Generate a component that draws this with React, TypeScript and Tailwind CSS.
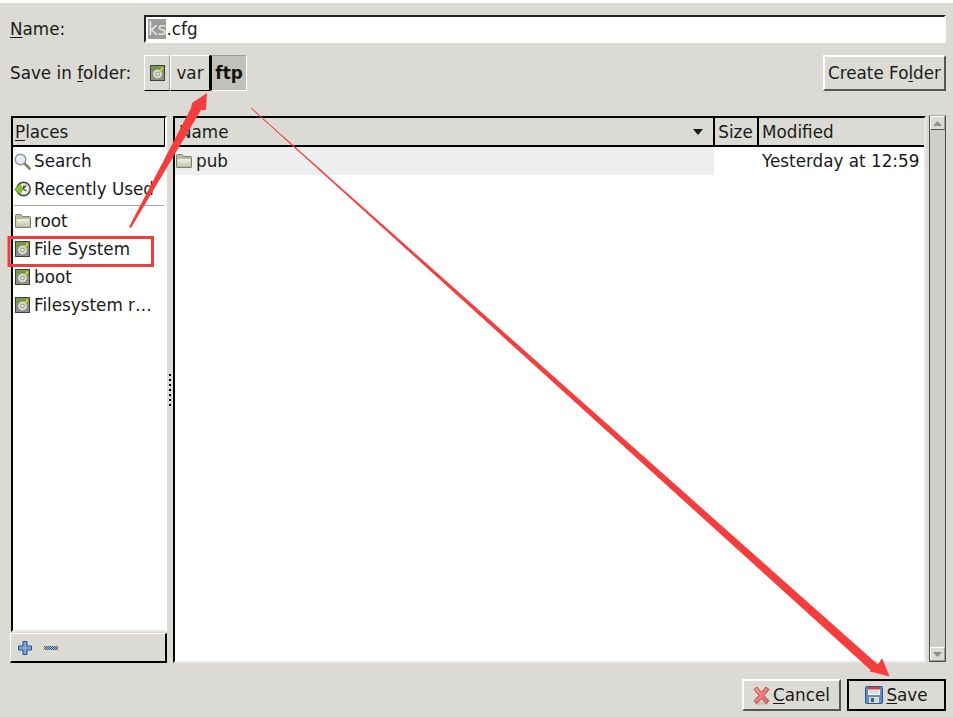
import React from 'react';

const bevelOut = 'border border-t-white border-l-white border-r-[#9d9c9a] border-b-[#9d9c9a]';

function DiskIcon() {
  return (
    <svg width="15" height="16" viewBox="0 0 15 16" className="shrink-0">
      <rect x="0.5" y="0.5" width="14" height="15" fill="#8f918a" stroke="#3c3f3a" />
      <rect x="1.5" y="1.5" width="12" height="5" fill="#6f9e36" />
      <circle cx="7.5" cy="9" r="5" fill="#d9dad3" stroke="#80827a" />
      <path d="M8 8 L12 2 L13.5 3 L9 9 Z" fill="#e8d44c" />
      <circle cx="7.5" cy="9" r="1.8" fill="#f4f4f0" stroke="#8c8e86" />
    </svg>
  );
}

function FolderIcon() {
  return (
    <svg width="16" height="14" viewBox="0 0 16 14" className="shrink-0">
      <defs>
        <linearGradient id="folderFill" x1="0" y1="0" x2="0" y2="1">
          <stop offset="0" stopColor="#eef0dc" />
          <stop offset="1" stopColor="#c3c8a4" />
        </linearGradient>
      </defs>
      <path d="M1 13.5 Q0.5 13.5 0.5 13 V1.5 Q0.5 0.5 1.5 0.5 H6 L7.5 2.5 H14.5 Q15.5 2.5 15.5 3.5 V13 Q15.5 13.5 15 13.5 Z" fill="#b9bda0" stroke="#7d8070" />
      <path d="M1.5 12.5 V5 H14.5 V12.5 Z" fill="url(#folderFill)" />
    </svg>
  );
}

function SearchIcon() {
  return (
    <svg width="17" height="17" viewBox="0 0 17 17" className="shrink-0">
      <path d="M10 10 L15.5 15.5" stroke="#86796a" strokeWidth="2.6" strokeLinecap="round" />
      <circle cx="6.5" cy="6.5" r="5.3" fill="#e6ecf3" stroke="#8d9298" strokeWidth="1.4" />
      <path d="M3.5 6 A3 3 0 0 1 6.5 3.2" fill="none" stroke="#ffffff" strokeWidth="1.2" />
    </svg>
  );
}

function RecentIcon() {
  return (
    <svg width="17" height="16" viewBox="0 0 17 16" className="shrink-0">
      <circle cx="9.5" cy="8" r="6.8" fill="#d9dbd2" stroke="#454a40" strokeWidth="1.4" />
      <circle cx="9.5" cy="8" r="4.6" fill="#f4f5ee" />
      <path d="M10 4.5 L9 8 L12.5 10 M12 4.5 L9 8" stroke="#4a4f44" strokeWidth="1.2" fill="none" />
      <path d="M0.5 8.5 L6 3 L7 5 L9 8 L6 13 Z" fill="#86c232" stroke="#5c9420" strokeWidth="0.7" />
    </svg>
  );
}

function CancelIcon() {
  return (
    <svg width="17" height="19" viewBox="0 0 17 19" className="shrink-0">
      <defs>
        <linearGradient id="cancelFill" x1="0" y1="0" x2="1" y2="1">
          <stop offset="0" stopColor="#f8a0a0" />
          <stop offset="1" stopColor="#e05a5a" />
        </linearGradient>
      </defs>
      <ellipse cx="8.5" cy="17.5" rx="7" ry="1.3" fill="#c4c2bd" />
      <path
        d="M1 3.5 L4 1 L8.5 6.5 L13 1 L16 3.5 L11 9.5 L16 15 L13 17.5 L8.5 12.5 L4 17.5 L1 15 L6 9.5 Z"
        fill="url(#cancelFill)"
        stroke="#b84a4a"
        strokeLinejoin="round"
      />
    </svg>
  );
}

function SaveIcon() {
  return (
    <svg width="18" height="18" viewBox="0 0 18 18" className="shrink-0">
      <rect x="0.5" y="0.5" width="17" height="17" rx="1" fill="#5f8dc6" stroke="#2f5488" />
      <rect x="3" y="1" width="12" height="8" fill="#f5f5f3" />
      <rect x="3" y="1" width="12" height="2.5" fill="#d23c3c" />
      <path d="M4 5 H14 M4 7 H14" stroke="#c6c9cc" />
      <rect x="4" y="11" width="10" height="6" fill="#d8d8d4" />
      <rect x="6" y="12" width="3" height="4" fill="#4a5a6c" />
    </svg>
  );
}

function PlaceRow({ icon, label }: { icon: React.ReactNode; label: string }) {
  return (
    <div className="flex h-[28px] items-center gap-[3px] pl-[1px] whitespace-nowrap">
      <div className="flex w-[17px] justify-center">{icon}</div>
      <span>{label}</span>
    </div>
  );
}

function HeaderCell({ className, children }: { className: string; children: React.ReactNode }) {
  return (
    <div className={`flex h-[27px] items-center border-r-2 border-r-black pt-[1px] ${className}`}>{children}</div>
  );
}

function Annotations() {
  return (
    <svg width="953" height="717" viewBox="0 0 953 717" className="pointer-events-none absolute -top-[3px] left-0">
      <rect x="9" y="237.5" width="143.5" height="28" fill="none" stroke="#f23c3c" strokeWidth="3" />
      <path d="M129 227 L191 108 L192 103 L207 93 L206 110 L201 110 L131 228 Z" fill="#f43d3d" />
      <path
        d="M251 108 L878 665 L882 659 L889 676 L870 671 L872 671 Z"
        fill="#f43d3d"
        stroke="#f43d3d"
        strokeWidth="0.8"
      />
    </svg>
  );
}

export default function App() {
  return (
    <div className="relative flex h-[717px] w-[953px] flex-col overflow-hidden border-t-[3px] border-t-white bg-[#dcdad5] font-['DejaVu_Sans',sans-serif] text-[16.8px] leading-none text-[#1a1a1a]">
      <div className="mt-[12px] flex h-[28px] items-center pr-[7px] pl-[10px]">
        <div className="w-[134px]">
          <span className="underline underline-offset-2">N</span>ame:
        </div>
        <div className="flex h-[28px] flex-1 items-center border-2 border-t-[#222] border-l-[#222] border-r-white border-b-white bg-white pl-[2px]">
          <span className="bg-[#9c9b97] py-[2px] text-[#e8e8e6]">ks</span>
          <span>.cfg</span>
        </div>
      </div>

      <div className="mt-[12px] flex h-[36px] items-center pr-[7px] pl-[10px]">
        <div className="w-[134px] pt-[1px] whitespace-nowrap">
          Save in <span className="underline underline-offset-2">f</span>older:
        </div>
        <div className={`flex h-[36px] w-[26px] items-center justify-center ${bevelOut} border-b-black`}>
          <DiskIcon />
        </div>
        <div className={`flex h-[36px] w-[40px] items-center justify-center pt-[1px] ${bevelOut} border-r-black border-b-black`}>
          var
        </div>
        <div className="flex h-[36px] w-[37px] items-center justify-center border border-t-[#9d9c9a] border-l-2 border-l-black border-r-white border-b-white bg-[#c2c0ba] pt-[1px] font-bold text-[#111]">
          ftp
        </div>
        <div className={`ml-auto flex h-[36px] w-[123px] items-center justify-center border-2 pt-[1px] ${bevelOut} border-r-[#555] border-b-[#555] whitespace-nowrap`}>
          <span>
            Create Fo<span className="underline underline-offset-2">l</span>der
          </span>
        </div>
      </div>

      <div className="mt-[25px] flex h-[547px] pr-[7px] pl-[11px]">
        <div className="flex w-[156px] flex-col">
          <div className="flex flex-1 flex-col border-t-2 border-r-2 border-b-2 border-l-2 border-t-black border-r-white border-b-[#e8e8e6] border-l-black bg-white">
            <div className="flex h-[29px] shrink-0 items-center border-r border-b-2 border-r-black border-b-black bg-[#dcdad5] pt-[1px] pl-[2px]">
              <span>
                <span className="underline underline-offset-2">P</span>laces
              </span>
            </div>
            <PlaceRow icon={<SearchIcon />} label="Search" />
            <PlaceRow icon={<RecentIcon />} label="Recently Used" />
            <div className="mx-[1px] mt-[2px] mb-[1px] h-[1px] bg-[#a8a6a0]" />
            <PlaceRow icon={<FolderIcon />} label="root" />
            <PlaceRow icon={<DiskIcon />} label="File System" />
            <PlaceRow icon={<DiskIcon />} label="boot" />
            <PlaceRow icon={<DiskIcon />} label="Filesystem r…" />
          </div>
          <div className="mt-[1px] -ml-[1px] flex h-[30px] w-[157px] items-center gap-[12px] border border-t-white border-r-2 border-b-2 border-l-white border-r-black border-b-black pl-[7px]">
            <svg width="14" height="14" viewBox="0 0 14 14">
              <path d="M5 .5 H9 V5 H13.5 V9 H9 V13.5 H5 V9 H.5 V5 H5 Z" fill="#7ba4d8" stroke="#24508f" />
            </svg>
            <svg width="14" height="4" viewBox="0 0 14 4">
              <defs>
                <pattern id="minusDither" width="2" height="2" patternUnits="userSpaceOnUse">
                  <rect width="2" height="2" fill="#a9bcd4" />
                  <rect width="1" height="1" fill="#3d5575" />
                  <rect x="1" y="1" width="1" height="1" fill="#3d5575" />
                </pattern>
              </defs>
              <rect width="14" height="4" fill="url(#minusDither)" />
            </svg>
          </div>
        </div>

        <div className="flex w-[6px] flex-col items-start justify-center gap-[3px] pl-[2px]">
          {[0, 1, 2, 3, 4, 5, 6].map(i => (
            <div key={i} className="h-[2px] w-[2px] bg-black" />
          ))}
        </div>

        <div className="flex w-[753px] flex-col border-t-2 border-r-2 border-b-2 border-l-2 border-t-black border-r-[#e8e8e6] border-b-[#e8e8e6] border-l-black bg-white">
          <div className="flex border-b-2 border-b-black bg-[#dcdad5]">
            <HeaderCell className="w-[540px] justify-between pr-[10px] pl-[4px]">
              <span>Name</span>
              <svg width="10" height="6" viewBox="0 0 10 6">
                <path d="M0 0 H10 L5 6 Z" fill="#1a1a1a" />
              </svg>
            </HeaderCell>
            <HeaderCell className="w-[44px] justify-center pr-[1px]">Size</HeaderCell>
            <div className="flex h-[27px] flex-1 items-center pt-[1px] pl-[3px]">Modified</div>
          </div>
          <div className="flex h-[28px] items-center bg-white">
            <div className="flex h-full w-[539px] items-center gap-[4px] bg-[#eeeeee] pl-[1px]">
              <FolderIcon />
              <span>pub</span>
            </div>
            <span className="ml-[48px] whitespace-nowrap">Yesterday at 12:59</span>
          </div>
        </div>

        <div className="mt-[-1px] ml-[3px] flex h-[547px] w-[17px] flex-col border border-[#4a4a48] border-t-[#b0aea9] bg-[#cecdc8]">
          <div className={`flex h-[14px] items-center justify-center bg-[#dcdad5] ${bevelOut} border-b-[#555]`}>
            <svg width="9" height="5" viewBox="0 0 9 5">
              <path d="M0 5 H9 L4.5 0 Z" fill="#8e8d89" />
            </svg>
          </div>
          <div className="flex-1" />
          <div className={`flex h-[14px] items-center justify-center bg-[#dcdad5] ${bevelOut} border-t-[#555]`}>
            <svg width="9" height="5" viewBox="0 0 9 5">
              <path d="M0 0 H9 L4.5 5 Z" fill="#8e8d89" />
            </svg>
          </div>
        </div>
      </div>

      <div className="mt-[16px] flex justify-end gap-[6px] pr-[7px]">
        <div className="flex h-[32px] w-[99px] items-center justify-center gap-[3px] border-2 border-t-white border-r-[#555] border-b-[#555] border-l-white">
          <CancelIcon />
          <span>
            <span className="underline underline-offset-2">C</span>ancel
          </span>
        </div>
        <div className="flex h-[32px] w-[99px] items-center justify-center gap-[3px] border-2 border-black">
          <SaveIcon />
          <span>
            <span className="underline underline-offset-2">S</span>ave
          </span>
        </div>
      </div>

      <Annotations />
    </div>
  );
}
